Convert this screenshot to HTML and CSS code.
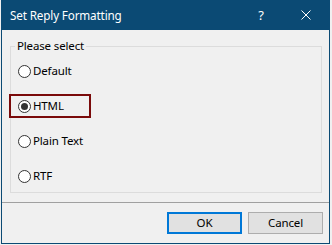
FILE: index.html
```html
<!DOCTYPE html>
<html>
<head>
<meta charset="utf-8">
<link rel="stylesheet" href="styles.css">
</head>
<body>
<div class="window">
  <div class="titlebar">
    <div class="title">Set Reply Formatting</div>
    <div class="tb-help">?</div>
    <div class="tb-close">
      <svg width="10" height="10" viewBox="0 0 10 10"><path d="M0.5 0.5 L9.5 9.5 M9.5 0.5 L0.5 9.5" stroke="#ffffff" stroke-width="1" fill="none"/></svg>
    </div>
  </div>
  <div class="group">
    <div class="legend">Please select</div>
    <div class="options">
      <div class="row"><span class="radio"></span><span class="label">Default</span></div>
      <div class="row marked"><span class="radio checked"></span><span class="label">HTML</span><span class="highlight"></span></div>
      <div class="row"><span class="radio"></span><span class="label">Plain Text</span></div>
      <div class="row"><span class="radio"></span><span class="label">RTF</span></div>
    </div>
  </div>
  <div class="separator"></div>
  <div class="buttons">
    <div class="btn btn-default">OK</div>
    <div class="btn">Cancel</div>
  </div>
</div>
</body>
</html>
```
FILE: styles.css
```css
html, body {
  margin: 0;
  padding: 0;
  background: #f0f0f0;
}
body {
  font-family: "Noto Sans", "Open Sans", sans-serif;
  font-size: 11.5px;
  letter-spacing: -0.15px;
  color: #000;
}
.window {
  box-sizing: border-box;
  width: 329px;
  height: 244px;
  margin-left: 1px;
  border: 1px solid #0b4a74;
  border-top: none;
  background: #f0f0f0;
  display: flex;
  flex-direction: column;
}
.titlebar {
  height: 30px;
  margin: 0 -1px;
  background: #0b4a74;
  color: #fff;
  display: flex;
  align-items: center;
}
.title {
  flex: 1;
  padding-left: 9px;
  font-size: 11.7px;
  line-height: 30px;
}
.tb-help {
  width: 42px;
  text-align: center;
  font-size: 13px;
  line-height: 30px;
}
.tb-close {
  width: 48px;
  height: 30px;
  display: flex;
  align-items: center;
  justify-content: center;
}
.tb-close svg { display: block; }
.group {
  margin: 16px 7px 0 8px;
  height: 147px;
  box-sizing: border-box;
  border: 1px solid #dcdcdc;
}
.legend {
  width: fit-content;
  margin: -9px 0 0 4px;
  padding: 0 2px;
  line-height: 16px;
  background: #f0f0f0;
}
.options {
  display: flex;
  flex-direction: column;
  gap: 15px;
  padding-top: 7px;
}
.row {
  position: relative;
  height: 20px;
  display: flex;
  align-items: center;
  padding-left: 7px;
}
.radio {
  box-sizing: border-box;
  width: 13px;
  height: 13px;
  border: 1px solid #333;
  border-radius: 50%;
  background: #fff;
  display: flex;
  align-items: center;
  justify-content: center;
  flex: none;
}
.radio.checked::after {
  content: "";
  width: 7px;
  height: 7px;
  border-radius: 50%;
  background: #333;
}
.label {
  margin-left: 2px;
  line-height: 20px;
}
.highlight {
  position: absolute;
  left: -2px;
  top: -2px;
  width: 82px;
  height: 24px;
  box-sizing: border-box;
  border: 2px solid #7a0a0a;
}
.separator {
  margin-top: 9px;
  height: 1px;
  background: #a0a0a0;
}
.buttons {
  margin-top: 9px;
  display: flex;
  justify-content: flex-end;
  gap: 6px;
  padding-right: 6px;
}
.btn {
  box-sizing: border-box;
  width: 75px;
  height: 22px;
  border: 1px solid #adadad;
  background: #e1e1e1;
  display: flex;
  align-items: center;
  justify-content: center;
  line-height: 20px;
}
.btn-default {
  border: 2px solid #0078d7;
}
```
